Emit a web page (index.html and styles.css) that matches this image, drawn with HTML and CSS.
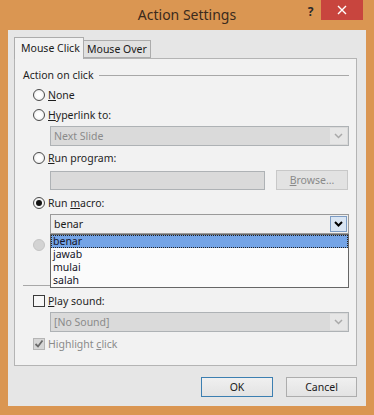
FILE: index.html
```html
<!DOCTYPE html>
<html>
<head>
<meta charset="utf-8">
<link rel="stylesheet" href="styles.css">
</head>
<body>
<div class="window">
  <div class="titlebar">
    <div class="title">Action Settings</div>
    <div class="controls">
      <div class="help">?</div>
      <div class="close">
        <svg width="10" height="10" viewBox="0 0 10 10"><path d="M1 1L9 9M9 1L1 9" stroke="#fff" stroke-width="1.4" fill="none"/></svg>
      </div>
    </div>
  </div>
  <div class="client">
    <div class="tabs">
      <div class="tab active">Mouse Click</div>
      <div class="tab inactive">Mouse Over</div>
    </div>
    <div class="panel">
      <div class="group"><span>Action on click</span><div class="rule"></div></div>

      <div class="opt"><span class="radio"></span><span><u>N</u>one</span></div>
      <div class="opt"><span class="radio"></span><span><u>H</u>yperlink to:</span></div>
      <div class="combo dis gap1">
        <span>Next Slide</span>
        <span class="arrow"><svg width="9" height="6" viewBox="0 0 9 6"><path d="M1 1L4.5 4.5L8 1" stroke="#a9a9a9" stroke-width="1.5" fill="none"/></svg></span>
      </div>

      <div class="opt gap2"><span class="radio"></span><span><u>R</u>un program:</span></div>
      <div class="fieldrow">
        <div class="field"></div>
        <div class="browse"><span><u>B</u>rowse...</span></div>
      </div>

      <div class="opt gap3"><span class="radio on"></span><span>Run <u>m</u>acro:</span></div>
      <div class="combo act gap1">
        <span>benar</span>
        <span class="arrow"><svg width="9" height="6" viewBox="0 0 9 6"><path d="M1 1L4.5 4.5L8 1" stroke="#000" stroke-width="2" fill="none"/></svg></span>
        <div class="list">
          <div class="item sel">benar</div>
          <div class="item">jawab</div>
          <div class="item">mulai</div>
          <div class="item">salah</div>
        </div>
      </div>

      <div class="opt gap1 dim"><span class="radio dis"></span></div>
      <div class="combo dis gap3">
        <span></span>
        <span class="arrow"></span>
      </div>

      <div class="sep"></div>

      <div class="opt play"><span class="check"></span><span><u>P</u>lay sound:</span></div>
      <div class="combo dis gap1">
        <span>[No Sound]</span>
        <span class="arrow"><svg width="9" height="6" viewBox="0 0 9 6"><path d="M1 1L4.5 4.5L8 1" stroke="#a9a9a9" stroke-width="1.5" fill="none"/></svg></span>
      </div>
      <div class="opt gap2 dim"><span class="check dis"><svg width="10" height="10" viewBox="0 0 10 10"><path d="M1.5 5L4 7.5L8.5 1.5" stroke="#6a6a6a" stroke-width="1.8" fill="none"/></svg></span><span>Highlight <u>c</u>lick</span></div>
    </div>
    <div class="buttons">
      <div class="btn default">OK</div>
      <div class="btn cancel">Cancel</div>
    </div>
  </div>
</div>
</body>
</html>
```

FILE: styles.css
```css
* { box-sizing: border-box; }
body {
  margin: 0;
  font-family: "Noto Sans", "DejaVu Sans", sans-serif;
  font-size: 10.5px;
  color: #1e1e1e;
}
.window {
  width: 374px;
  height: 415px;
  background: #da9652;
  display: flex;
  flex-direction: column;
}
.titlebar {
  height: 30px;
  display: grid;
  grid-template-columns: 74px 1fr 74px;
}
.title {
  grid-column: 2;
  text-align: center;
  font-size: 14px;
  line-height: 30px;
  color: #3b2a1c;
}
.controls {
  display: flex;
  align-items: flex-start;
}
.help {
  width: 21px;
  height: 20px;
  font-weight: bold;
  font-size: 12px;
  line-height: 24px;
  text-align: center;
  color: #2a2a2a;
}
.close {
  width: 42px;
  height: 20px;
  background: #c8453e;
  display: flex;
  align-items: center;
  justify-content: center;
}
.client {
  flex: 1;
  margin: 0 8px 9px;
  background: #e6e6e6;
  padding: 7px 9px 0 6px;
  display: flex;
  flex-direction: column;
}
.tabs {
  display: flex;
  height: 21px;
  align-items: flex-start;
  position: relative;
  z-index: 1;
}
.tab {
  border: 1px solid #acacac;
  display: flex;
  align-items: center;
  color: #1a1a1a;
}
.tab.active {
  width: 70px;
  height: 22px;
  background: #f2f2f2;
  border-bottom: none;
  padding-left: 6px;
  padding-bottom: 1px;
}
.tab.inactive {
  width: 67px;
  height: 18px;
  margin-top: 3px;
  border-left: none;
  background: #e1e1e1;
  padding-left: 3px;
}
.panel {
  height: 308px;
  border: 1px solid #b4b4b4;
  background: #f2f2f2;
  padding: 6px 7px 0 8px;
  display: flex;
  flex-direction: column;
}
.group {
  height: 20px;
  display: flex;
  align-items: center;
  gap: 5px;
}
.group .rule {
  flex: 1;
  height: 1px;
  background: #a8a8a8;
}
.opt {
  height: 20px;
  display: flex;
  align-items: center;
  gap: 3px;
  padding-left: 10px;
}
.gap1 { margin-top: 1px; }
.gap2 { margin-top: 2px; }
.gap3 { margin-top: 3px; }
.dim { color: #8a8a8a; }
.radio {
  width: 12px;
  height: 12px;
  border-radius: 50%;
  border: 1px solid #4a4a4a;
  background: radial-gradient(circle, #ffffff 30%, #e4e4e4);
  display: flex;
  align-items: center;
  justify-content: center;
}
.radio.on::after {
  content: "";
  width: 6px;
  height: 6px;
  border-radius: 50%;
  background: #111;
}
.radio.dis {
  border-color: #c4c4c4;
  background: #d3d3d3;
}
.check {
  width: 12px;
  height: 12px;
  border: 1px solid #3a3a3a;
  background: #f7f7f7;
  display: flex;
  align-items: center;
  justify-content: center;
}
.check.dis {
  border-color: #b5b5b5;
  background: #d6d6d6;
}
.combo {
  margin-left: 27px;
  height: 20px;
  display: flex;
  align-items: center;
  border: 1px solid #aeb2b5;
  padding-left: 3px;
  position: relative;
}
.combo.dis {
  background: #dadada;
  color: #8a8a8a;
}
.combo.act {
  background: #efefef;
  border-color: #9a9a9a;
  color: #1a1a1a;
}
.combo .arrow {
  margin-left: auto;
  margin-right: 1px;
  width: 17px;
  height: 16px;
  display: flex;
  align-items: center;
  justify-content: center;
  background: #e6e6e6;
}
.combo.act .arrow {
  background: #d9e5f3;
  border: 1px solid #7c9cc4;
}
.list {
  position: absolute;
  left: -1px;
  top: 19px;
  width: 299px;
  height: 54px;
  background: #fbfbfb;
  border: 1px solid #666;
  z-index: 2;
}
.item {
  height: 13px;
  line-height: 13px;
  padding-left: 2px;
  color: #141428;
}
.item.sel {
  background: #74a4e6;
  outline: 1px dotted #222;
  outline-offset: -1px;
}
.fieldrow {
  margin-left: 27px;
  margin-top: 2px;
  display: flex;
  gap: 11px;
}
.field {
  width: 215px;
  height: 19px;
  margin-top: 1px;
  background: #dadada;
  border: 1px solid #aeb2b5;
}
.browse {
  width: 72px;
  height: 20px;
  background: #e2e2e2;
  border: 1px solid #c8c8c8;
  color: #8a8a8a;
  display: flex;
  align-items: center;
  justify-content: center;
}
.sep {
  height: 1px;
  background: #a8a8a8;
  margin-top: 7px;
}
.play { margin-top: 5px; }
.buttons {
  display: flex;
  justify-content: flex-end;
  gap: 13px;
  margin-top: 11px;
}
.btn {
  width: 72px;
  height: 20px;
  border: 1px solid #adadad;
  background: linear-gradient(#f0f0f0, #e3e3e3);
  display: flex;
  align-items: center;
  justify-content: center;
  color: #1a1a1a;
}
.btn.default { border-color: #3c7fb1; }
.btn.cancel { width: 71px; }
```
